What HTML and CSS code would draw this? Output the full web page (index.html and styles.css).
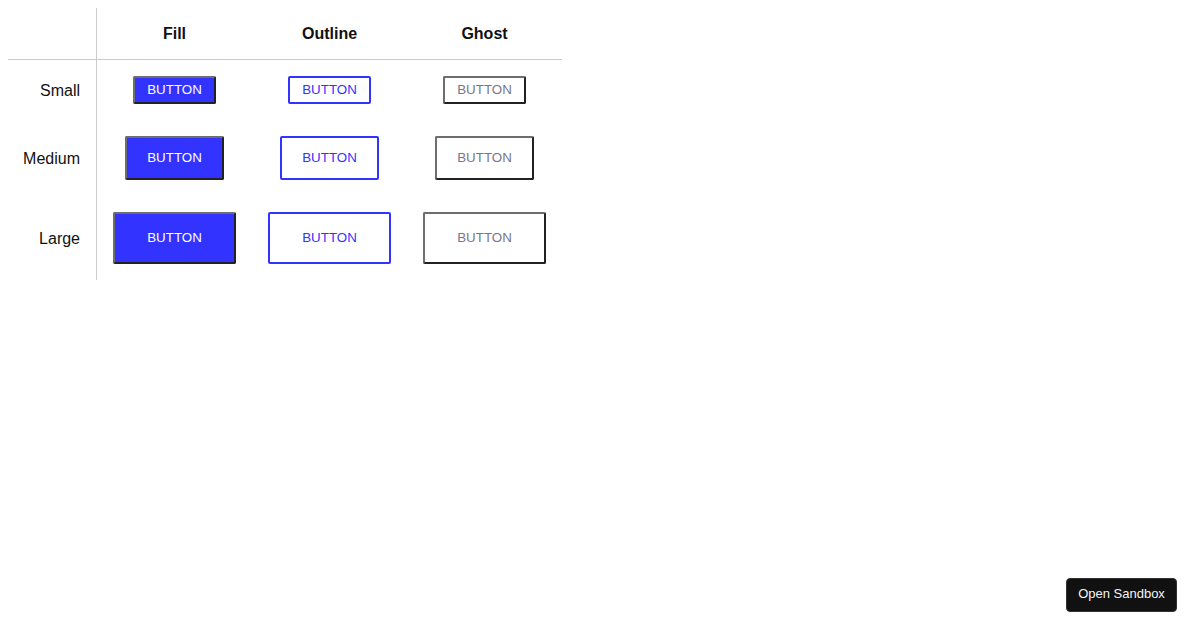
FILE: index.html
```html
<!DOCTYPE html>
<html>
<head>
<meta charset="utf-8">
<link rel="stylesheet" href="styles.css">
</head>
<body>
<table class="grid">
  <thead>
    <tr>
      <th class="corner"></th>
      <th class="col-head">Fill</th>
      <th class="col-head">Outline</th>
      <th class="col-head">Ghost</th>
    </tr>
  </thead>
  <tbody>
    <tr>
      <th class="row-head">Small</th>
      <td class="cell"><button class="btn fill sm">BUTTON</button></td>
      <td class="cell"><button class="btn outline sm">BUTTON</button></td>
      <td class="cell"><button class="btn ghost sm">BUTTON</button></td>
    </tr>
    <tr>
      <th class="row-head">Medium</th>
      <td class="cell"><button class="btn fill md">BUTTON</button></td>
      <td class="cell"><button class="btn outline md">BUTTON</button></td>
      <td class="cell"><button class="btn ghost md">BUTTON</button></td>
    </tr>
    <tr>
      <th class="row-head">Large</th>
      <td class="cell"><button class="btn fill lg">BUTTON</button></td>
      <td class="cell"><button class="btn outline lg">BUTTON</button></td>
      <td class="cell"><button class="btn ghost lg">BUTTON</button></td>
    </tr>
  </tbody>
</table>
<button class="sandbox">Open Sandbox</button>
</body>
</html>
```
FILE: styles.css
```css
body {
  margin: 8px;
  font-family: "Liberation Sans", Arial, sans-serif;
  background: #fff;
  color: #111;
}
.grid {
  border-collapse: collapse;
  border-spacing: 0;
}
.corner {
  width: 88px;
  padding: 0;
  border-right: 1px solid #ccc;
  border-bottom: 1px solid #ccc;
}
.col-head {
  width: 155px;
  padding: 16px 0;
  height: 19px;
  line-height: 19px;
  font-size: 16px;
  font-weight: bold;
  text-align: center;
  border-bottom: 1px solid #ccc;
  color: #111;
}
.row-head {
  font-weight: normal;
  font-size: 16px;
  text-align: right;
  padding: 2px 16px 0 0;
  border-right: 1px solid #ccc;
  color: #111;
}
.cell {
  text-align: center;
  padding: 16px 0;
  vertical-align: middle;
}
.btn {
  font-family: "Liberation Sans", Arial, sans-serif;
  font-size: 13.333px;
  line-height: 16px;
  margin: 0;
  display: inline-block;
  vertical-align: middle;
}
.sm { padding: 4px 12px; }
.md { padding: 12px 20px; }
.lg { padding: 16px 32px; }
.fill {
  background: #3333ff;
  color: #fff;
  border-width: 2px;
  border-style: solid;
  border-color: #6e6e6e #222 #222 #6e6e6e;
  border-radius: 2px;
}
.outline {
  background: #fff;
  color: #3333ff;
  border: 2px solid #3333ff;
  border-radius: 2px;
}
.ghost {
  background: #fff;
  color: #777788;
  border-width: 2px;
  border-style: solid;
  border-color: #6e6e6e #222 #222 #6e6e6e;
  border-radius: 2px;
}
.sandbox {
  position: fixed;
  right: 23px;
  bottom: 18px;
  width: 111px;
  height: 34px;
  background: #111;
  color: #f4f4f4;
  border: 1px solid #333;
  border-radius: 4px;
  font-family: "Liberation Sans", Arial, sans-serif;
  font-size: 13px;
  line-height: 16px;
  padding: 0 0 2px 0;
}
```
